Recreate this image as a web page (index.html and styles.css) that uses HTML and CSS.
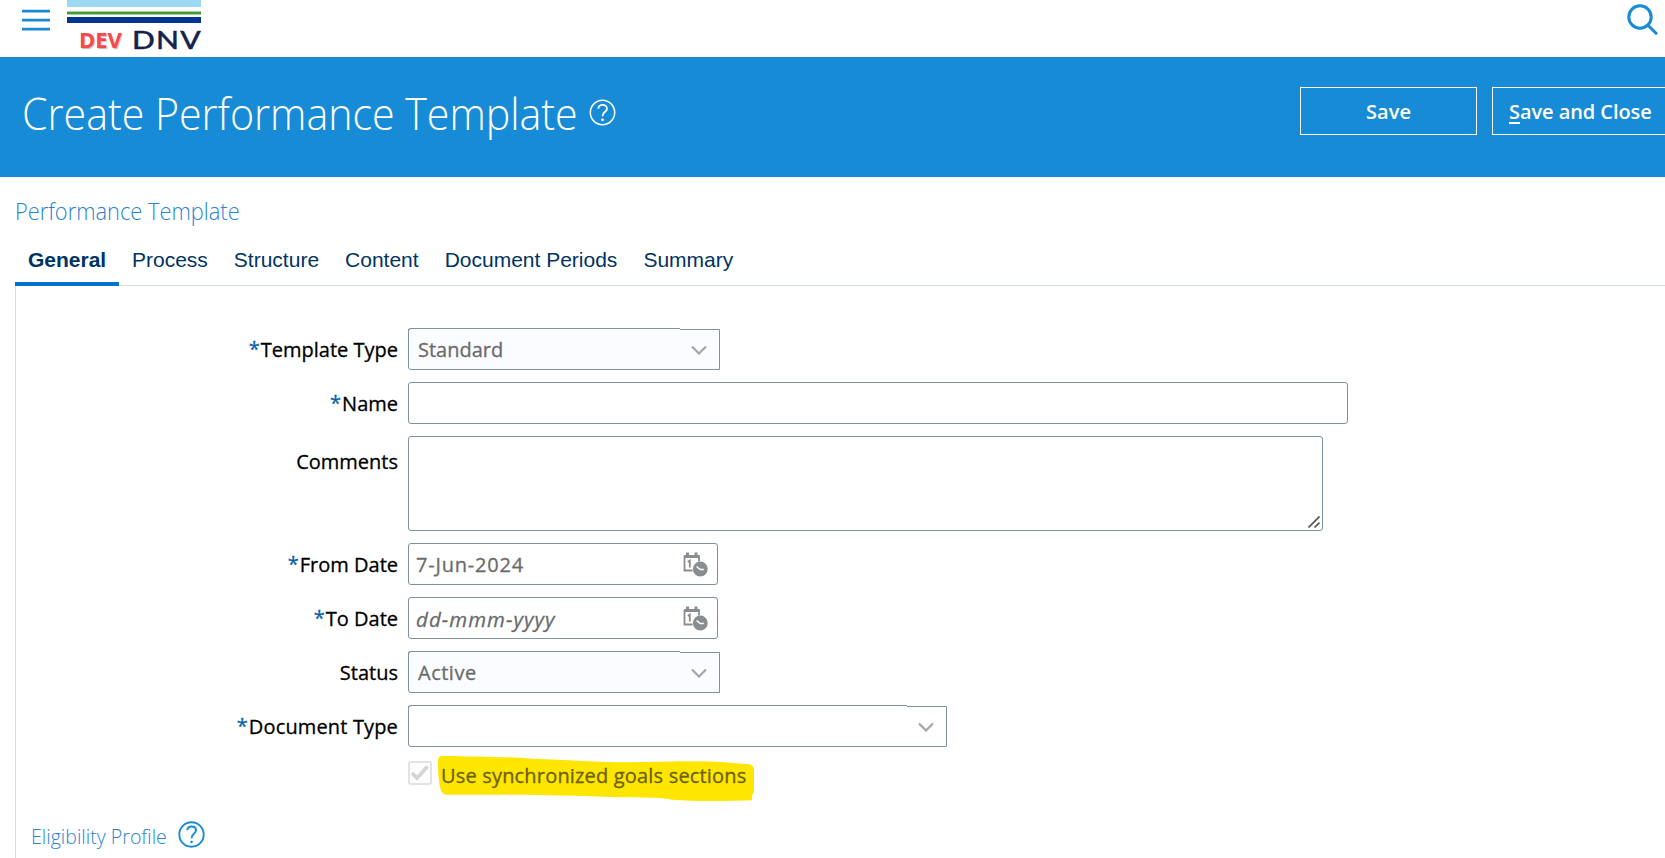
FILE: index.html
```
<!DOCTYPE html>
<html lang="en">
<head>
<meta charset="utf-8">
<title>Create Performance Template</title>
<link rel="stylesheet" href="styles.css">
</head>
<body>
<header class="topbar">
  <svg class="menu" width="28" height="24" viewBox="0 0 28 24"><path d="M0 2.2h28M0 11.2h28M0 20.2h28" stroke="#188bd7" stroke-width="2.8"/></svg>
  <div class="logo">
    <div class="stripe sky"></div>
    <div class="stripe green"></div>
    <div class="stripe navy"></div>
    <div class="brand"><span class="dev">DEV</span><span class="dnv">DNV</span></div>
  </div>
  <svg class="search" width="32" height="32" viewBox="0 0 32 32" fill="none" stroke="#188bd7" stroke-width="3"><circle cx="13" cy="13" r="11.2"/><path d="M21 21.3l9 9"/></svg>
</header>
<section class="titlebar">
  <h1><span class="title-text">Create Performance Template</span></h1>
  <svg class="help" width="27" height="27" viewBox="0 0 27 27" fill="none" stroke="#fff" stroke-width="1.5"><circle cx="13.5" cy="13.5" r="12.2"/><path d="M9.3 9.8C9.6 4.700 18 4.800 18 9.500C18 13 13.500 12.700 13.500 17.300" stroke-width="1.800"/><circle cx="13.500" cy="20.800" r="1.400" fill="#fff" stroke="none"/></svg>
  <div class="actions">
    <button class="btn save">Save</button>
    <button class="btn close"><span><u>S</u>ave and Close</span></button>
  </div>
</section>
<main>
  <h2 class="subtitle"><span class="subtitle-text">Performance Template</span></h2>
  <nav class="tabs">
    <a class="tab active">General</a><a class="tab">Process</a><a class="tab">Structure</a><a class="tab">Content</a><a class="tab">Document Periods</a><a class="tab">Summary</a>
  </nav>
  <section class="panel">
    <div class="row"><label><i class="req">*</i><span>Template Type</span></label>
      <div class="field select w-select off"><span class="v-std">Standard</span><svg class="chev" width="16" height="10" viewBox="0 0 16 10"><path d="M1 1.500l7 7 7-7"/></svg></div></div>
    <div class="row"><label><i class="req">*</i><span>Name</span></label><div class="field w-name"></div></div>
    <div class="row tall"><label class="top"><span>Comments</span></label>
      <div class="field area"><svg width="12" height="12" viewBox="0 0 12 12"><path d="M0.500 11.500l11-11M6.500 11.500l5-5" stroke="#555" stroke-width="1.700"/></svg></div></div>
    <div class="row"><label><i class="req">*</i><span>From Date</span></label>
      <div class="field w-date"><span class="v-from">7-Jun-2024</span><svg class="cal" width="25" height="25" viewBox="0 0 25 25"><path d="M1.500 4v14.500h8M1.500 4.500h14.500v5" fill="none" stroke="#888d91" stroke-width="1.800"/><path d="M1 3h15.500v3H1zM3 .5h3v4H3zM11.500 .5h3v4h-3z" fill="#888d91"/><path d="M4.800 10l2-1.500v7" fill="none" stroke="#888d91" stroke-width="1.800"/><circle cx="17.300" cy="17" r="7.400" fill="#888d91"/><path d="M13.500 14.500l3.800 3h3.500" fill="none" stroke="#fff" stroke-width="1.500"/></svg></div></div>
    <div class="row"><label><i class="req">*</i><span>To Date</span></label>
      <div class="field w-date"><span class="v-to">dd-mmm-yyyy</span><svg class="cal" width="25" height="25" viewBox="0 0 25 25"><path d="M1.500 4v14.500h8M1.500 4.500h14.500v5" fill="none" stroke="#888d91" stroke-width="1.800"/><path d="M1 3h15.500v3H1zM3 .5h3v4H3zM11.500 .5h3v4h-3z" fill="#888d91"/><path d="M4.800 10l2-1.500v7" fill="none" stroke="#888d91" stroke-width="1.800"/><circle cx="17.300" cy="17" r="7.400" fill="#888d91"/><path d="M13.500 14.500l3.800 3h3.500" fill="none" stroke="#fff" stroke-width="1.500"/></svg></div></div>
    <div class="row"><label><span>Status</span></label>
      <div class="field select w-select off"><span class="v-act">Active</span><svg class="chev" width="16" height="10" viewBox="0 0 16 10"><path d="M1 1.500l7 7 7-7"/></svg></div></div>
    <div class="row"><label><i class="req">*</i><span class="l-doc">Document Type</span></label>
      <div class="field select w-doc"><svg class="chev" width="16" height="10" viewBox="0 0 16 10"><path d="M1 1.500l7 7 7-7"/></svg></div></div>
    <div class="check-row">
      <svg class="box" width="24" height="24" viewBox="0 0 24 24"><rect x="1" y="1" width="22" height="22" rx="1.500" fill="#fdfdfd" stroke="#d9dbdc" stroke-width="1.500"/><path d="M4 12l5 5L19.500 5.500" fill="none" stroke="#d3d5d6" stroke-width="3.800"/></svg>
      <div class="marked">
        <svg class="marker" width="318" height="46" viewBox="0 0 318 51" preserveAspectRatio="none"><path d="M4 0C40 .5 70 1 95 3C130 4 150 6.500 185 7C220 6.500 250 5.500 270 6C290 6.500 298 8.500 311 9Q317 11 316 18V38Q315 43 314 43V49C290 50 260 50.500 234 48.500C220 45 190 47 160 45C120 43.500 90 43 60 43H8Q3 42 2 34C0 24 0 10 0 4Q1 0 4 0z" fill="#ffe600"/></svg>
        <span class="sync">Use synchronized goals sections</span>
      </div>
    </div>
    <div class="eligibility"><span class="elig">Eligibility Profile</span>
      <svg width="27" height="27" viewBox="0 0 27 27" fill="none" stroke="#188bd7" stroke-width="1.900"><circle cx="13.500" cy="13.500" r="12.200"/><path d="M9.300 9.300C9.600 4.200 18 4.300 18 9.300C18 13 13.500 12.700 13.500 17.300" stroke-width="2"/><circle cx="13.500" cy="21" r="1.300" fill="#188bd7" stroke="none"/></svg>
    </div>
  </section>
</main>
</body>
</html>
```
FILE: styles.css
```
* { box-sizing: border-box; }
body { margin: 0; width: 1665px; height: 858px; overflow: hidden; background: #fff; color: #000; font-family: "Open Sans", "Noto Sans", sans-serif; font-size: 20px; }
svg { display: block; flex: none; }
.topbar { display: flex; height: 57px; align-items: flex-start; }
.menu { margin: 9px 0 0 22px; }
.logo { width: 134px; margin-left: 17px; }
.sky { height: 7px; background: #9bdaf2; }
.green { height: 4px; margin-top: 4px; background: #3f9c35; border: solid #a5d09f; border-width: 1px 0; }
.navy { height: 6px; margin-top: 2px; background: #003591; }
.brand { display: flex; height: 32px; line-height: 32px; white-space: nowrap; }
.dev { width: 54px; padding-left: 12px; font-size: 22px; font-weight: 700; color: #f9474c; letter-spacing: 0; text-shadow: 1px 1px 1px #bbb; }
.dnv { margin-left: 11px; font-family: Lato, sans-serif; font-size: 25px; font-weight: 500; color: #14234b; letter-spacing: 1px; transform: scaleX(1.2); transform-origin: left; -webkit-text-stroke: .4px; }
.search { margin: 4px 6px 0 auto; }
.titlebar { display: flex; height: 120px; background: #188bd7; color: #fff; }
h1, h2 { margin: 0; white-space: nowrap; font-weight: 300; }
h1 { width: 556px; padding-left: 22px; font-size: 45px; line-height: 111px; }
.title-text, .subtitle-text, .elig { display: inline-block; transform-origin: left; }
.title-text { transform: scaleX(.914); }
.subtitle-text { transform: scaleX(.93); }
.help { margin: 42px 0 0 33px; }
.actions { display: flex; gap: 15px; margin: 30px 0 0 auto; }
.btn { height: 48px; padding: 1px 0 0; background: transparent; border: 1px solid #fff; color: #fff; font: 600 20px/45px "Open Sans", sans-serif; white-space: nowrap; }
.save { width: 177px; }
.close { width: 173px; border-right: 0; padding-left: 16px; text-align: left; letter-spacing: -.07px; }
u { text-underline-offset: 3px; }
.subtitle { height: 70px; padding-left: 15px; color: #2a83cf; font-size: 23.500px; line-height: 68px; }
.tabs { display: flex; height: 39px; margin-left: 15px; border-bottom: 1px solid #d3dde6; font: 21px/25px "Liberation Sans", Arial, sans-serif; color: #003462; }
.tab { height: 38px; margin-right: 26px; }
.active { width: 104px; height: 39px; margin-right: 13px; padding-left: 13px; font-weight: 700; border-bottom: 4px solid #0572ce; white-space: nowrap; }
.panel { height: 572px; margin-left: 15px; padding-top: 42px; border-left: 1px solid #d3dde6; }
.row { display: flex; gap: 10px; height: 42px; margin-bottom: 12px; }
.tall { height: 95px; }
label { display: flex; justify-content: flex-end; width: 382px; -webkit-text-stroke: .3px; line-height: 44px; white-space: nowrap; }
label.top { line-height: 52px; }
.req { margin-right: 1px; color: #0a5fa8; font-style: normal; line-height: 42px; }
.field { display: flex; align-items: center; justify-content: space-between; height: 42px; border: 1px solid #7c929f; border-radius: 3px; color: #6b6b6b; -webkit-text-stroke: .3px; padding-left: 9px; white-space: nowrap; }
.select { position: relative; height: 41px; margin-top: 1px; padding-right: 12px; border-radius: 0 0 0 3px; border-top: 1px solid #7c929f; }
.select::before { content: ""; position: absolute; left: -1px; top: -2px; right: 39px; height: 3px; border: solid #7c929f; border-width: 1px 0 0 1px; border-radius: 3px 0 0 0; background: #fff; }
.off, .off::before { background: #fbfcff; }
.chev { margin-left: auto; fill: none; stroke: #a5a5a5; stroke-width: 2.200; }
.w-select { width: 312px; }
.w-name { width: 940px; }
.area { width: 915px; height: 95px; align-items: flex-end; justify-content: flex-end; padding: 2px; }
.w-date { width: 310px; padding: 1px 9px 0 7px; }
.v-from { letter-spacing: .8px; }
.v-to { font-style: italic; font-size: 20.500px; letter-spacing: 1.050px; }
.v-act { letter-spacing: .5px; }
.l-doc { letter-spacing: .15px; }
.w-doc { width: 539px; }
.check-row { display: flex; height: 50px; margin-left: 392px; padding-top: 2px; }
.marked { position: relative; margin-left: 6px; padding-left: 3px; }
.marker { position: absolute; left: 0; top: -5px; }
.sync { position: relative; line-height: 30px; letter-spacing: .18px; -webkit-text-stroke: .3px; color: #6b6100; white-space: nowrap; }
.eligibility { display: flex; gap: 13px; padding: 12px 0 0 15px; }
.elig { width: 134px; transform: scaleX(.955); color: #2a83cf; font-size: 20.500px; font-weight: 300; line-height: 30px; white-space: nowrap; }
```
